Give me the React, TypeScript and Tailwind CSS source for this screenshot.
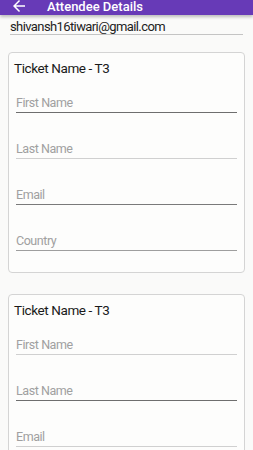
import {ReactNode} from "react";

const font = {fontFamily: "Roboto, 'Noto Sans', sans-serif"};

function BackArrow() {
    return (
        <svg width="18" height="18" viewBox="0 0 24 24" fill="white">
            <path d="M20 11H7.83l5.59-5.59L12 4l-8 8 8 8 1.41-1.41L7.83 13H20v-2z"/>
        </svg>
    );
}

function Field({label, line, first}: { label: string; line: string; first?: boolean }) {
    return (
        <div className={(first ? "mt-[19px] " : "mt-[28px] ") + "mx-[6px] pb-[1px] border-b " + line}>
            <div className="text-[12.5px] leading-[16px] tracking-[-0.45px] text-[#a0a0a0]">{label}</div>
        </div>
    );
}

function Card({children}: { children: ReactNode }) {
    return (
        <div className="mx-[8px] border border-[#d4d4d4] rounded-[4px] bg-[#fdfdfc] pt-[7px] px-[1px]">
            <div className="text-[13.5px] leading-[16px] tracking-[-0.4px] text-[#1a1a1a] pl-[4px]">Ticket Name - T3</div>
            {children}
        </div>
    );
}

export default function App() {
    return (
        <main className="w-[253px] h-[450px] overflow-hidden bg-[#fafaf9]" style={font}>
            <div className="h-[15px] bg-[#673ab7] flex items-start shadow-[0_2px_3px_rgba(0,0,0,0.25)] relative z-10">
                <div className="ml-[10px] -mt-[3px]"><BackArrow/></div>
                <div className="ml-[19px] text-[13px] leading-[13px] font-medium text-white">Attendee Details</div>
            </div>
            <div className="mx-[10px] mt-[4px] border-b border-[#c4c4c4]">
                <div className="text-[13px] leading-[15px] tracking-[-0.6px] text-[#222222]">shivansh16tiwari@gmail.com</div>
            </div>
            <div className="mt-[17px] flex flex-col gap-[21px]">
                <Card>
                    <Field label="First Name" line="border-[#6e6e6e]" first/>
                    <Field label="Last Name" line="border-[#d0d0d0]"/>
                    <Field label="Email" line="border-[#7a7a7a]"/>
                    <Field label="Country" line="border-[#9e9e9e]"/>
                    <div className="h-[21px]"/>
                </Card>
                <Card>
                    <Field label="First Name" line="border-[#d0d0d0]" first/>
                    <Field label="Last Name" line="border-[#6e6e6e]"/>
                    <Field label="Email" line="border-[#d0d0d0]"/>
                    <div className="h-[21px]"/>
                </Card>
            </div>
        </main>
    );
}
